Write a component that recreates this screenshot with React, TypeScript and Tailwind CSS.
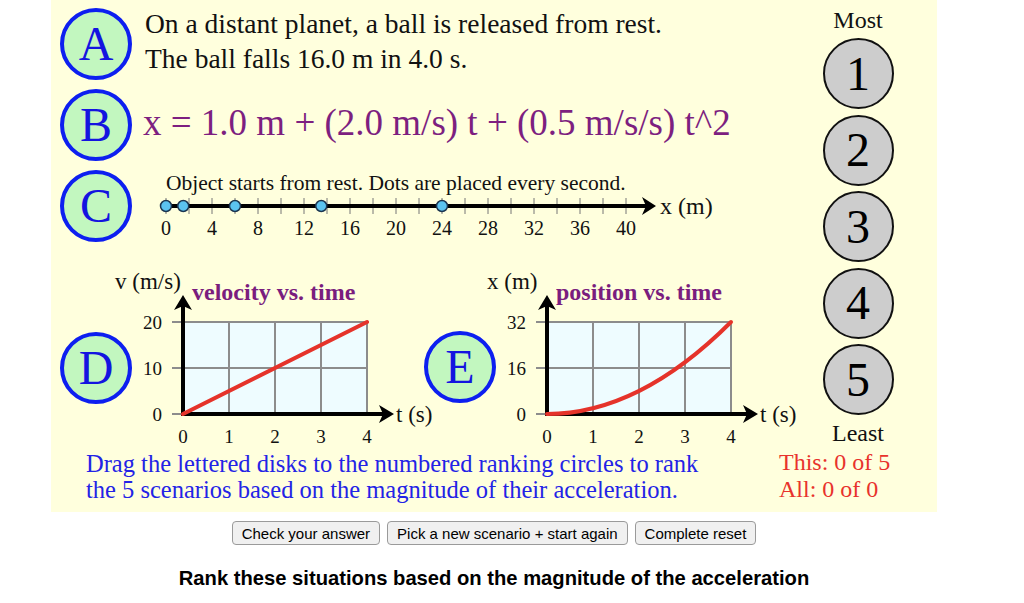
const serif = "font-['Liberation_Serif','Times_New_Roman',serif]";

function LetterDisk({ letter, className = '' }: { letter: string; className?: string }) {
  return (
    <div
      className={`flex h-[72px] w-[72px] shrink-0 items-center justify-center rounded-full border-4 border-[#0d1ff0] bg-[#c2f7bf] text-[48px] leading-none text-[#1414e0] ${className}`}
    >
      {letter}
    </div>
  );
}

function RankCircle({ n }: { n: number }) {
  return (
    <div className="flex h-[71px] w-[71px] items-center justify-center rounded-full border-2 border-[#111] bg-[#cdcdcd] text-[48px] leading-none text-black">
      {n}
    </div>
  );
}

// dots every second for x = 1.5 t^2
const dotPositions = [0, 1.5, 6, 13.5, 24];

function NumberLine() {
  const px = (u: number) => 26 + 11.5 * u;
  const ticks = Array.from({ length: 21 }, (_, i) => i * 2);
  const labels = Array.from({ length: 11 }, (_, i) => i * 4);
  return (
    <svg width={580} height={75} className="ml-[8px] shrink-0 overflow-visible" fontFamily="'Liberation Serif', serif">
      <text x={26} y={20} fontSize={21.5} fill="#111">
        Object starts from rest. Dots are placed every second.
      </text>
      {ticks.map((t) => (
        <line key={t} x1={px(t)} x2={px(t)} y1={28} y2={44} stroke="#777" strokeWidth={1} />
      ))}
      <line x1={21} x2={506} y1={36} y2={36} stroke="#000" strokeWidth={4} />
      <polygon points="516,36 502,27 506,36 502,45" fill="#000" />
      <text x={520} y={44} fontSize={24} fill="#111">
        x (m)
      </text>
      {dotPositions.map((d) => (
        <circle key={d} cx={px(d)} cy={36} r={5.5} fill="#5bc3f0" stroke="#1c3550" strokeWidth={1.5} />
      ))}
      {labels.map((l) => (
        <text key={l} x={px(l)} y={65} fontSize={20} textAnchor="middle" fill="#111">
          {l}
        </text>
      ))}
    </svg>
  );
}

type ChartProps = {
  width: number;
  yLabel: string;
  yLabelX: number;
  title: string;
  yTicks: string[];
  curve: string;
};

function Chart({ width, yLabel, yLabelX, title, yTicks, curve }: ChartProps) {
  const cols = [0, 1, 2, 3, 4];
  const rows = [57, 103, 149];
  return (
    <svg width={width} height={185} className="ml-[4px] shrink-0 overflow-visible" fontFamily="'Liberation Serif', serif">
      <rect x={47} y={57} width={184} height={92} fill="#eefcff" />
      {cols.slice(1).map((c) => (
        <line key={c} x1={47 + 46 * c} x2={47 + 46 * c} y1={57} y2={149} stroke="#8c8c8c" strokeWidth={2} />
      ))}
      {rows.map((y) => (
        <line key={y} x1={36} x2={231} y1={y} y2={y} stroke="#8c8c8c" strokeWidth={2} />
      ))}
      {/* axes */}
      <line x1={47} x2={47} y1={151} y2={40} stroke="#000" strokeWidth={4} />
      <polygon points="47,30 56,45 47,41 38,45" fill="#000" />
      <line x1={45} x2={248} y1={149} y2={149} stroke="#000" strokeWidth={4} />
      <polygon points="258,149 243,140 247,149 243,158" fill="#000" />
      <path d={curve} fill="none" stroke="#e5332a" strokeWidth={4} strokeLinecap="round" />
      {yTicks.map((t, i) => (
        <text key={t} x={26} y={rows[i] + 7} fontSize={19} textAnchor="end" fill="#111">
          {t}
        </text>
      ))}
      {cols.map((c) => (
        <text key={c} x={47 + 46 * c} y={178} fontSize={19} textAnchor="middle" fill="#111">
          {c}
        </text>
      ))}
      <text x={260} y={157} fontSize={23} fill="#111">
        t (s)
      </text>
      <text x={yLabelX} y={24} fontSize={23} fill="#111">
        {yLabel}
      </text>
      <text x={56} y={35} fontSize={24} fontWeight={700} fill="#7a1d7e">
        {title}
      </text>
    </svg>
  );
}

export default function App() {
  return (
    <div className="min-h-screen bg-white">
      <div className="ml-[51px] w-[886px]">
        {/* Ranking panel */}
        <div className={`flex h-[512px] bg-[#ffffdd] ${serif}`}>
          <div className="flex w-[728px] shrink-0 flex-col pl-[9px]">
            <div className="flex">
              <LetterDisk letter="A" className="mt-[8px]" />
              <div className="ml-[13px] mt-[6px] text-[27.5px] leading-[35px] text-[#111]">
                On a distant planet, a ball is released from rest.
                <br />
                The ball falls 16.0 m in 4.0 s.
              </div>
            </div>
            <div className="mt-[9px] flex">
              <LetterDisk letter="B" />
              <div className="ml-[11px] mt-[15px] whitespace-nowrap text-[37px] leading-none text-[#7d1f80]">
                x = 1.0 m + (2.0 m/s) t + (0.5 m/s/s) t^2
              </div>
            </div>
            <div className="mt-[9px] flex">
              <LetterDisk letter="C" />
              <NumberLine />
            </div>
            <div className="mt-[20px] flex items-start">
              <LetterDisk letter="D" className="mt-[67px]" />
              <Chart
                width={288}
                yLabel="v (m/s)"
                yLabelX={-21}
                title="velocity vs. time"
                yTicks={['20', '10', '0']}
                curve="M47 149 L231 57"
              />
              <LetterDisk letter="E" className="mt-[66px]" />
              <Chart
                width={279}
                yLabel="x (m)"
                yLabelX={-13}
                title="position vs. time"
                yTicks={['32', '16', '0']}
                curve="M47 149 Q139 149 231 57"
              />
            </div>
            <p className="ml-[26px] mt-[1px] text-[24.5px] leading-[26px] text-[#2323e6]">
              Drag the lettered disks to the numbered ranking circles to rank
              <br />
              the 5 scenarios based on the magnitude of their acceleration.
            </p>
          </div>

          <div className="flex flex-1 flex-col pt-[7px]">
            <div className="self-center text-[24px] leading-[26px] text-[#111]">Most</div>
            <div className="mt-[5px] flex flex-col items-center gap-[5.5px]">
              {[1, 2, 3, 4, 5].map((n) => (
                <RankCircle key={n} n={n} />
              ))}
            </div>
            <div className="mt-[5px] self-center text-[24px] leading-[26px] text-[#111]">Least</div>
            <div className="mt-[3px] text-[24px] leading-[27px] text-[#e8322c]">
              This: 0 of 5
              <br />
              All: 0 of 0
            </div>
          </div>
        </div>

        {/* Controls */}
        <div className="mt-[9px] flex justify-center gap-[7px] font-['Liberation_Sans',Arial,sans-serif]">
          {['Check your answer', 'Pick a new scenario + start again', 'Complete reset'].map((label) => (
            <button
              key={label}
              className="h-[24px] rounded-[4px] border border-[#9a9a9a] bg-[#f0f0f0] px-[9px] text-[15px] leading-none text-black"
            >
              {label}
            </button>
          ))}
        </div>

        <h2 className="mt-[22px] text-center font-['Liberation_Sans',Arial,sans-serif] text-[20.2px] font-bold leading-[22px] text-black">
          Rank these situations based on the magnitude of the acceleration
        </h2>
      </div>
    </div>
  );
}
